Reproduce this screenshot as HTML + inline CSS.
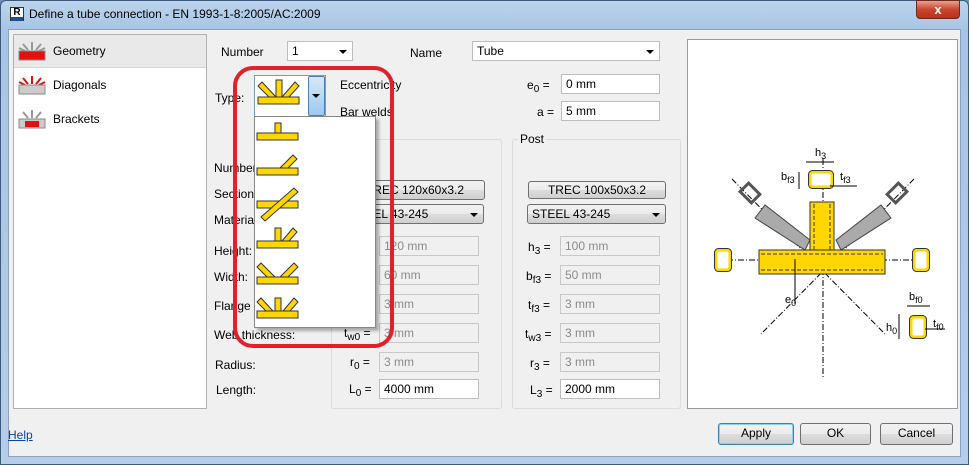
<!DOCTYPE html>
<html><head><style>
*{box-sizing:border-box;margin:0;padding:0}
body{width:969px;height:465px;overflow:hidden;font-family:"Liberation Sans",sans-serif;font-size:12px;color:#000;background:#6b8fb8;position:relative}
.a{position:absolute}
.win{left:0;top:0;width:969px;height:465px;background:linear-gradient(#bcd4ec,#a7c4e4 30px,#b5cde8);border:1px solid #3d5a7a;border-radius:6px 6px 0 0}
.client{left:8px;top:29px;width:953px;height:428px;background:#f0f0f0;border:1px solid #8aa2bf}
.t{position:absolute;white-space:nowrap}
.in{position:absolute;background:#fff;border:1px solid #bdbdbd;height:20px;padding:2px 4px;font-size:12px}
.dis{background:#f0f0f0;color:#8a8a8a;border-color:#c8c8c8}
.btn{position:absolute;border:1px solid #707070;border-radius:3px;background:linear-gradient(#f2f2f2,#ebebeb 50%,#dddddd 51%,#cfcfcf);text-align:center;line-height:19px}
.arr{position:absolute;right:5px;top:8px;width:0;height:0;border-left:4px solid transparent;border-right:4px solid transparent;border-top:4px solid #000}
.grp{position:absolute;border:1px solid #dcdcdc;border-radius:3px}
sub{font-size:10px;vertical-align:-3px}
</style></head><body>
<div class="a win"></div>
<div class="a" style="left:10px;top:7px;width:14px;height:14px;background:#fff;border:1px solid #333"><div style="font:bold 10px 'Liberation Sans';text-align:center;line-height:9px">R</div><div style="height:4px;background:#1c4f8e"></div></div>
<div class="t" style="left:29px;top:7px;font-size:12px">Define a tube connection - EN 1993-1-8:2005/AC:2009</div>
<div class="a" style="left:916px;top:0;width:44px;height:19px;background:linear-gradient(#e9a08e,#c8452e 50%,#b8301a);border:1px solid #6b2a20;border-radius:0 0 4px 4px;color:#fff;font-weight:bold;text-align:center;line-height:17px;font-size:13px">x</div>
<div class="a client"></div>
<!-- left list -->
<div class="a" style="left:13px;top:34px;width:194px;height:375px;background:#fff;border:1px solid #b0b0b0"></div>
<div class="a" style="left:14px;top:35px;width:192px;height:33px;background:#e9e9e9;border-bottom:1px solid #d5d5d5"></div>
<svg class="a" style="left:17px;top:40px" width="30" height="90">
<g stroke="#999" stroke-width="2"><line x1="15" y1="2" x2="15" y2="10"/><line x1="6" y1="4" x2="11" y2="10"/><line x1="24" y1="4" x2="19" y2="10"/><line x1="2" y1="8" x2="8" y2="11"/><line x1="28" y1="8" x2="22" y2="11"/></g>
<rect x="2" y="11" width="26" height="9" fill="#e31010" stroke="#888"/>
<g stroke="#e31010" stroke-width="2"><line x1="15" y1="36" x2="15" y2="44"/><line x1="6" y1="38" x2="11" y2="44"/><line x1="24" y1="38" x2="19" y2="44"/><line x1="2" y1="42" x2="8" y2="45"/><line x1="28" y1="42" x2="22" y2="45"/></g>
<rect x="2" y="45" width="26" height="9" fill="#ccc" stroke="#888"/>
<g stroke="#999" stroke-width="2"><line x1="15" y1="70" x2="15" y2="78"/><line x1="6" y1="72" x2="11" y2="78"/><line x1="24" y1="72" x2="19" y2="78"/></g>
<rect x="2" y="79" width="26" height="9" fill="#ccc" stroke="#888"/><rect x="8" y="81" width="14" height="6" fill="#e31010"/>
</svg>
<div class="t" style="left:53px;top:44px">Geometry</div>
<div class="t" style="left:53px;top:78px">Diagonals</div>
<div class="t" style="left:53px;top:112px">Brackets</div>
<!-- top fields -->
<div class="t" style="left:221px;top:45px">Number</div>
<div class="in" style="left:287px;top:41px;width:66px">1<div class="arr"></div></div>
<div class="t" style="left:410px;top:46px">Name</div>
<div class="in" style="left:472px;top:41px;width:188px">Tube<div class="arr"></div></div>
<div class="t" style="left:215px;top:91px">Type:</div>
<div class="a" style="left:254px;top:75px;width:72px;height:42px;background:#fff;border:1px solid #7a9cc4"></div>
<div class="a" style="left:308px;top:76px;width:17px;height:40px;background:linear-gradient(#d6e8f7,#9ccaf0);border:1px solid #4e7eb5;border-radius:2px"><div class="arr" style="right:4px;top:17px"></div></div>
<div class="t" style="left:340px;top:78px">Eccentricity</div>
<div class="t" style="left:340px;top:105px">Bar welds</div>
<div class="t" style="left:527px;top:78px">e<sub>0</sub> =</div>
<div class="in" style="left:561px;top:74px;width:99px">0 mm</div>
<div class="t" style="left:537px;top:105px">a =</div>
<div class="in" style="left:561px;top:101px;width:99px">5 mm</div>
<!-- groups -->
<div class="grp" style="left:331px;top:139px;width:171px;height:270px"></div>
<div class="grp" style="left:512px;top:139px;width:169px;height:270px"></div>
<div class="t" style="left:518px;top:132px;background:#f0f0f0;padding:0 2px">Post</div>
<div class="btn" style="left:345px;top:180px;width:140px;height:20px">TREC 120x60x3.2</div>
<div class="btn" style="left:528px;top:181px;width:138px;height:18px;line-height:16px">TREC 100x50x3.2</div>
<div class="btn" style="left:345px;top:204px;width:139px;height:20px;text-align:left;padding-left:4px">STEEL 43-245<div class="arr"></div></div>
<div class="btn" style="left:527px;top:204px;width:139px;height:20px;text-align:left;padding-left:4px">STEEL 43-245<div class="arr"></div></div>
<div class="t" style="left:214px;top:161px">Number</div>
<div class="t" style="left:214px;top:187px">Section:</div>
<div class="t" style="left:214px;top:213px">Material</div>
<div class="t" style="left:214px;top:244px">Height:</div>
<div class="t" style="left:214px;top:270px">Width:</div>
<div class="t" style="left:214px;top:299px">Flange t</div>
<div class="t" style="left:214px;top:328px">Web thickness:</div>
<div class="t" style="left:215px;top:358px">Radius:</div>
<div class="t" style="left:216px;top:383px">Length:</div>
<div class="in dis" style="left:379px;top:236px;width:100px">120 mm</div>
<div class="in dis" style="left:379px;top:265px;width:100px">60 mm</div>
<div class="in dis" style="left:379px;top:294px;width:100px">3 mm</div>
<div class="t" style="left:344px;top:326px">t<sub>w0</sub> =</div>
<div class="in dis" style="left:379px;top:323px;width:100px">3 mm</div>
<div class="t" style="left:350px;top:355px">r<sub>0</sub> =</div>
<div class="in dis" style="left:379px;top:352px;width:100px">3 mm</div>
<div class="t" style="left:349px;top:382px">L<sub>0</sub> =</div>
<div class="in" style="left:379px;top:379px;width:100px">4000 mm</div>
<div class="t" style="left:528px;top:240px">h<sub>3</sub> =</div>
<div class="in dis" style="left:560px;top:236px;width:100px">100 mm</div>
<div class="t" style="left:526px;top:269px">b<sub>f3</sub> =</div>
<div class="in dis" style="left:560px;top:265px;width:100px">50 mm</div>
<div class="t" style="left:528px;top:298px">t<sub>f3</sub> =</div>
<div class="in dis" style="left:560px;top:294px;width:100px">3 mm</div>
<div class="t" style="left:525px;top:327px">t<sub>w3</sub> =</div>
<div class="in dis" style="left:560px;top:323px;width:100px">3 mm</div>
<div class="t" style="left:530px;top:356px">r<sub>3</sub> =</div>
<div class="in dis" style="left:560px;top:352px;width:100px">3 mm</div>
<div class="t" style="left:530px;top:383px">L<sub>3</sub> =</div>
<div class="in" style="left:560px;top:379px;width:100px">2000 mm</div>
<!-- dropdown list -->
<div class="a" style="left:254px;top:116px;width:122px;height:212px;background:#fff;border:1px solid #888;box-shadow:3px 3px 3px rgba(0,0,0,.3)"></div>
<svg class="a" style="left:0;top:0" width="400" height="340">
<g fill="#ffd700" stroke="#333" stroke-width="1">
<!-- main icon in combo -->
<rect x="258" y="97" width="41" height="7"/><rect x="276" y="80" width="6" height="17"/>
<polygon points="258,86 262,82 276,97 269,97"/><polygon points="299,86 295,82 282,97 289,97"/>
<!-- 1 -->
<rect x="257" y="133" width="41" height="7"/><rect x="275" y="123" width="6" height="10"/>
<!-- 2 -->
<rect x="257" y="168" width="41" height="7"/><polygon points="280,168 293,155 297,159 288,168"/>
<!-- 3 -->
<rect x="257" y="201" width="41" height="7"/><polygon points="261,217 294,188 298,192 265,221"/>
<!-- 4 -->
<rect x="257" y="241" width="41" height="7"/><rect x="275" y="228" width="6" height="13"/><polygon points="282,241 293,228 297,232 289,241"/>
<!-- 5 -->
<rect x="257" y="277" width="41" height="7"/><polygon points="257,267 261,263 275,277 267,277"/><polygon points="298,267 294,263 280,277 288,277"/>
<!-- 6 -->
<rect x="257" y="311" width="41" height="7"/><rect x="275" y="298" width="6" height="13"/><polygon points="257,302 261,298 273,311 266,311"/><polygon points="298,302 294,298 283,311 290,311"/>
</g>
</svg>
<!-- red outline -->
<div class="a" style="left:233px;top:66px;width:161px;height:282px;border:4px solid #e0202a;border-radius:20px"></div>
<!-- drawing panel -->
<div class="a" style="left:687px;top:39px;width:271px;height:370px;background:#fff;border:1px solid #9a9a9a"></div>
<svg class="a" style="left:687px;top:39px" width="271" height="370" font-family="Liberation Sans" font-size="11">
<g stroke="#000" stroke-width="1" stroke-dasharray="6,2,1,2" fill="none">
<line x1="136" y1="120" x2="136" y2="340"/><line x1="40" y1="221" x2="240" y2="221"/>
<line x1="45" y1="140" x2="198" y2="295"/><line x1="227" y1="140" x2="74" y2="295"/>
</g>
<g fill="#aaa" stroke="#444">
<polygon points="68,179 78,166 123,201 118,211"/><polygon points="204,179 194,166 149,201 154,211"/>
</g>
<g fill="none" stroke="#555" stroke-width="3"><rect x="55" y="148" width="16" height="12" transform="rotate(45 63 154)"/><rect x="202" y="148" width="16" height="12" transform="rotate(-45 210 154)"/></g>
<rect x="123" y="163" width="24" height="50" fill="#ffd700" stroke="#333"/>
<rect x="72" y="211" width="126" height="24" fill="#ffd700" stroke="#333"/>
<g stroke="#333" stroke-dasharray="4,2"><line x1="74" y1="215" x2="196" y2="215"/><line x1="74" y1="231" x2="196" y2="231"/><line x1="127" y1="165" x2="127" y2="211"/><line x1="143" y1="165" x2="143" y2="211"/></g>
<g fill="#fff" stroke="#ffd700" stroke-width="3"><rect x="123" y="133" width="22" height="15" rx="3"/><rect x="29" y="211" width="14" height="20" rx="3"/><rect x="227" y="211" width="14" height="20" rx="3"/><rect x="224" y="278" width="14" height="20" rx="3"/></g>
<g fill="none" stroke="#333"><rect x="121.5" y="131.5" width="25" height="18" rx="4"/><rect x="27.5" y="209.5" width="17" height="23" rx="4"/><rect x="225.5" y="209.5" width="17" height="23" rx="4"/><rect x="222.5" y="276.5" width="17" height="23" rx="4"/></g>
<g stroke="#000"><line x1="119" y1="123" x2="147" y2="123"/><line x1="112" y1="133" x2="112" y2="150"/><line x1="143" y1="147" x2="170" y2="147"/><line x1="220" y1="267" x2="243" y2="267"/><line x1="212" y1="275" x2="212" y2="300"/><line x1="238" y1="290" x2="258" y2="290"/><line x1="108" y1="220" x2="108" y2="265"/></g>
<text x="128" y="117">h<tspan font-size="9" dy="3">3</tspan></text>
<text x="94" y="141">b<tspan font-size="9" dy="3">f3</tspan></text>
<text x="153" y="141">t<tspan font-size="9" dy="3">f3</tspan></text>
<text x="98" y="264">e<tspan font-size="9" dy="3">0</tspan></text>
<text x="222" y="261">b<tspan font-size="9" dy="3">f0</tspan></text>
<text x="199" y="292">h<tspan font-size="9" dy="3">0</tspan></text>
<text x="246" y="288">t<tspan font-size="9" dy="3">f0</tspan></text>
</svg>
<!-- bottom -->
<div class="t" style="left:8px;top:428px;color:#0645ad;text-decoration:underline">Help</div>
<div class="btn" style="left:718px;top:423px;width:76px;height:22px;border-color:#3c7fb1;box-shadow:inset 0 0 0 1px #8fd0f0">Apply</div>
<div class="btn" style="left:800px;top:423px;width:71px;height:22px">OK</div>
<div class="btn" style="left:880px;top:423px;width:73px;height:22px">Cancel</div>
</body></html>
